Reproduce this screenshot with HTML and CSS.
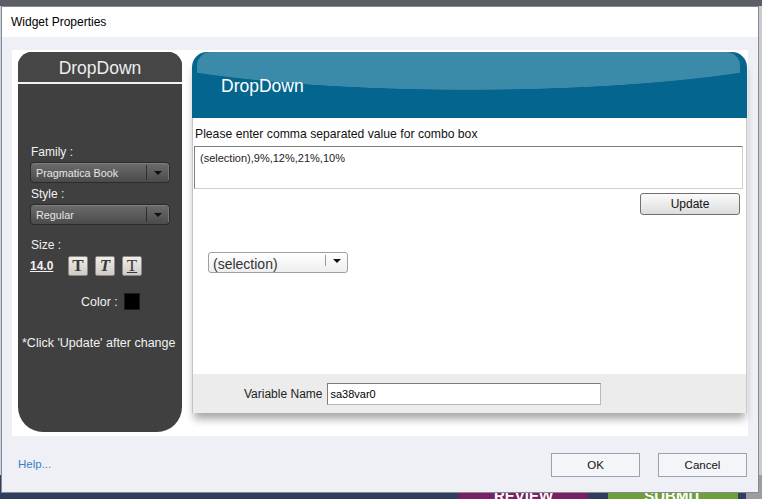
FILE: index.html
```html
<!DOCTYPE html>
<html lang="en">
<head>
  <meta charset="UTF-8">
  <title>Widget Properties</title>
  <link rel="stylesheet" href="styles.css">
</head>
<body>
  <div class="screen">
    <div class="page-bar">
      <span class="page-btn review">REVIEW</span>
      <span class="page-btn submit">SUBMIT</span>
    </div>

    <div class="dialog">
      <div class="dialog-title">Widget Properties</div>

      <div class="dialog-body">
        <div class="editor">
          <aside class="font-panel">
            <div class="font-head">DropDown</div>
            <div class="font-fields">
              <div class="fld-label">Family :</div>
              <div class="dark-select">
                <span class="dark-value">Pragmatica Book</span>
                <span class="dark-arrow"></span>
              </div>

              <div class="fld-label gap-s">Style :</div>
              <div class="dark-select">
                <span class="dark-value">Regular</span>
                <span class="dark-arrow"></span>
              </div>

              <div class="fld-label gap-l">Size :</div>
              <div class="size-row">
                <span class="size-val">14.0</span>
                <span class="tbtn bold">T</span>
                <span class="tbtn italic">T</span>
                <span class="tbtn under">T</span>
              </div>

              <div class="color-row">
                <span>Color :</span>
                <span class="swatch"></span>
              </div>
            </div>
            <p class="note">*Click 'Update' after change</p>
          </aside>

          <section class="preview">
            <div class="banner"><span class="banner-title">DropDown</span></div>
            <div class="preview-body">
              <p class="hint">Please enter comma separated value for combo box</p>
              <div class="values">(selection),9%,12%,21%,10%</div>
              <div class="update-row">
                <button class="btn-update" type="button">Update</button>
              </div>
              <div class="combo">
                <span class="combo-value">(selection)</span>
                <span class="combo-arrow"></span>
              </div>
            </div>
            <div class="var-bar">
              <label for="varname">Variable Name</label>
              <input id="varname" type="text" value="sa38var0">
            </div>
          </section>
        </div>

        <div class="dialog-foot">
          <a class="help" href="#">Help...</a>
          <button class="btn-win ok" type="button">OK</button>
          <button class="btn-win" type="button">Cancel</button>
        </div>
      </div>
    </div>
  </div>
</body>
</html>
```

FILE: styles.css
```css
body {
  margin: 0;
  font-family: "Liberation Sans", Arial, sans-serif;
}

.screen {
  position: relative;
  width: 762px;
  height: 499px;
  overflow: hidden;
  display: flex;
  flex-direction: column;
  background:
    linear-gradient(#5b5e65, #5b5e65) top / 100% 6px no-repeat,
    linear-gradient(to right, #c5d2e2 1px, #5b5e65 1px, #5b5e65 759px, #c9cbd0 759px);
}

/* the page behind the dialog */
.page-bar {
  margin-top: auto;
  height: 24px;
  display: flex;
  gap: 20px;
  padding-left: 459px;
  background: linear-gradient(to right, #2e3e5c 746px, #9b9da2 746px);
}

.page-btn {
  width: 129px;
  padding-top: 13px;
  text-align: center;
  color: #fff;
  font-weight: bold;
  font-size: 15px;
  line-height: 16px;
}

.review {
  background-color: #7a1f63;
}

.submit {
  width: 130px;
  background-color: #6e9f3b;
}

/* dialog */
.dialog {
  position: absolute;
  left: 1px;
  top: 6px;
  width: 758px;
  height: 487px;
  box-sizing: border-box;
  border: 1px solid #868a93;
  background-color: #eef0f5;
  display: flex;
  flex-direction: column;
}

.dialog-title {
  height: 30px;
  padding-left: 9px;
  background-color: #fff;
  font-size: 12px;
  line-height: 30px;
  color: #000;
}

.dialog-body {
  flex: 1;
  padding: 13px 10px 0;
  display: flex;
  flex-direction: column;
}

.editor {
  height: 386px;
  box-sizing: border-box;
  padding: 2px 1px 4px 6px;
  display: flex;
  gap: 10px;
  background-color: #fff;
}

/* left font panel */
.font-panel {
  width: 164px;
  background-color: #404040;
  border-radius: 14px 14px 25px 25px;
  color: #f2f2f2;
}

.font-head {
  height: 30px;
  line-height: 32px;
  text-align: center;
  font-size: 17.5px;
  color: #eeeeee;
  background-color: #464646;
  border-bottom: 2px solid #f2f2f2;
  border-radius: 14px 14px 0 0;
}

.font-fields {
  padding: 61px 12px 0;
}

.fld-label {
  font-size: 12px;
  line-height: 14px;
  margin: 0 0 3px 1px;
}

.gap-s {
  margin-top: 4px;
}

.gap-l {
  margin-top: 13px;
  margin-bottom: 4px;
}

.dark-select {
  height: 21px;
  box-sizing: border-box;
  display: flex;
  align-items: center;
  border: 1px solid #2b2b2b;
  border-radius: 4px;
  background: linear-gradient(#6c6c6c, #4b4b4b);
  box-shadow: inset 0 1px 0 rgba(255, 255, 255, 0.12);
}

.dark-value {
  flex: 1;
  padding-left: 5px;
  font-size: 10.8px;
  color: #e6e6e6;
}

.dark-arrow {
  width: 22px;
  height: 15px;
  border-left: 1px solid #2f2f2f;
  box-shadow: -1px 0 0 #777 inset;
  display: flex;
  align-items: center;
  justify-content: center;
}

.dark-arrow::after {
  content: "";
  border-left: 4px solid transparent;
  border-right: 4px solid transparent;
  border-top: 4px solid #111;
}

.size-row {
  display: flex;
  align-items: center;
  gap: 7px;
}

.size-val {
  width: 24px;
  margin-right: 7px;
  font-size: 12px;
  font-weight: bold;
  text-decoration: underline;
}

.tbtn {
  width: 20px;
  height: 20px;
  box-sizing: border-box;
  display: flex;
  align-items: center;
  justify-content: center;
  border: 1px solid #8d8a86;
  border-radius: 2px;
  background: linear-gradient(#f1eeea, #cfcac5);
  font-family: "Liberation Serif", "Times New Roman", serif;
  font-size: 17px;
  line-height: 18px;
  color: #3a3a3a;
}

.bold {
  font-weight: bold;
}

.italic {
  font-weight: bold;
  font-style: italic;
}

.under {
  text-decoration: underline;
}

.color-row {
  margin: 17px 0 0 51px;
  display: flex;
  align-items: center;
  gap: 6px;
  font-size: 12.5px;
}

.swatch {
  width: 16px;
  height: 17px;
  box-sizing: border-box;
  border: 1px solid #1a1a1a;
  background-color: #000;
}

.note {
  margin: 26px 0 0 4px;
  font-size: 12.5px;
  line-height: 14px;
}

/* right preview panel */
.preview {
  width: 555px;
  height: 361px;
  display: flex;
  flex-direction: column;
  background-color: #fff;
  border-radius: 15px 15px 0 0;
  box-shadow: 0 8px 8px -2px rgba(0, 0, 0, 0.35);
}

.banner {
  position: relative;
  height: 66px;
  flex-shrink: 0;
  padding-left: 29px;
  display: flex;
  align-items: center;
  overflow: hidden;
  background-color: #04668f;
  border-radius: 15px 15px 0 0;
}

.banner::before {
  content: "";
  position: absolute;
  left: 5px;
  right: 7px;
  top: 0;
  height: 40px;
  border-radius: 14px 14px 0 0;
  background: radial-gradient(ellipse 390px 60px at 50% -22px, #3c8aa9 99%, rgba(60, 138, 169, 0) 100%);
}

.banner-title {
  position: relative;
  margin-top: 2px;
  font-size: 17.5px;
  color: #fff;
}

.preview-body {
  flex: 1;
  padding: 9px 3px 0 1px;
  border-left: 1px solid #c4c4c4;
  border-right: 1px solid #c8c8c8;
}

.hint {
  margin: 0 0 5px 1px;
  font-size: 12.2px;
  line-height: 14px;
  color: #111;
}

.values {
  height: 43px;
  box-sizing: border-box;
  padding: 4px 5px;
  border: 1px solid;
  border-color: #7c7c7c #d0d0d0 #d0d0d0 #7c7c7c;
  font-size: 11px;
  line-height: 14px;
  color: #222;
}

.update-row {
  display: flex;
  justify-content: flex-end;
  margin: 4px 3px 0 0;
}

.btn-update {
  width: 100px;
  height: 22px;
  border: 1px solid #707070;
  border-radius: 3px;
  background: linear-gradient(#fbfbfb, #dcdcdc);
  font-family: "Liberation Sans", Arial, sans-serif;
  font-size: 12px;
  color: #111;
}

.combo {
  width: 140px;
  height: 21px;
  box-sizing: border-box;
  margin: 37px 0 0 14px;
  display: flex;
  align-items: flex-end;
  border: 1px solid #a0a0a0;
  border-radius: 3px;
  background: linear-gradient(#ffffff, #eeeeee);
}

.combo-value {
  flex: 1;
  padding: 0 0 0 4px;
  font-size: 14px;
  line-height: 16px;
  color: #333;
}

.combo-arrow {
  width: 21px;
  height: 11px;
  margin-bottom: 6px;
  border-left: 1px solid #9a9a9a;
  display: flex;
  align-items: center;
  justify-content: center;
}

.combo-arrow::after {
  content: "";
  border-left: 4px solid transparent;
  border-right: 4px solid transparent;
  border-top: 4px solid #111;
}

.var-bar {
  height: 39px;
  flex-shrink: 0;
  display: flex;
  align-items: center;
  padding-left: 51px;
  background-color: #ececec;
  border-left: 1px solid #c4c4c4;
  border-right: 1px solid #c8c8c8;
}

.var-bar label {
  margin-right: 5px;
  font-size: 12px;
  color: #222;
}

.var-bar input {
  width: 274px;
  height: 22px;
  box-sizing: border-box;
  padding: 0 2px;
  border: 1px solid;
  border-color: #7c7c7c #b8b8b8 #b8b8b8 #7c7c7c;
  background-color: #fff;
  font-family: "Liberation Sans", Arial, sans-serif;
  font-size: 11px;
  color: #000;
}

/* dialog footer */
.dialog-foot {
  flex: 1;
  display: flex;
  align-items: flex-start;
  padding: 17px 1px 0 6px;
}

.help {
  line-height: 22px;
  font-size: 11.5px;
  color: #3a7cc8;
  text-decoration: none;
}

.btn-win {
  width: 89px;
  height: 24px;
  border: 1px solid #9aa0b6;
  background-color: #f4f5f9;
  font-family: "Liberation Sans", Arial, sans-serif;
  font-size: 11.5px;
  color: #111;
}

.ok {
  margin-left: auto;
  margin-right: 18px;
}
```
